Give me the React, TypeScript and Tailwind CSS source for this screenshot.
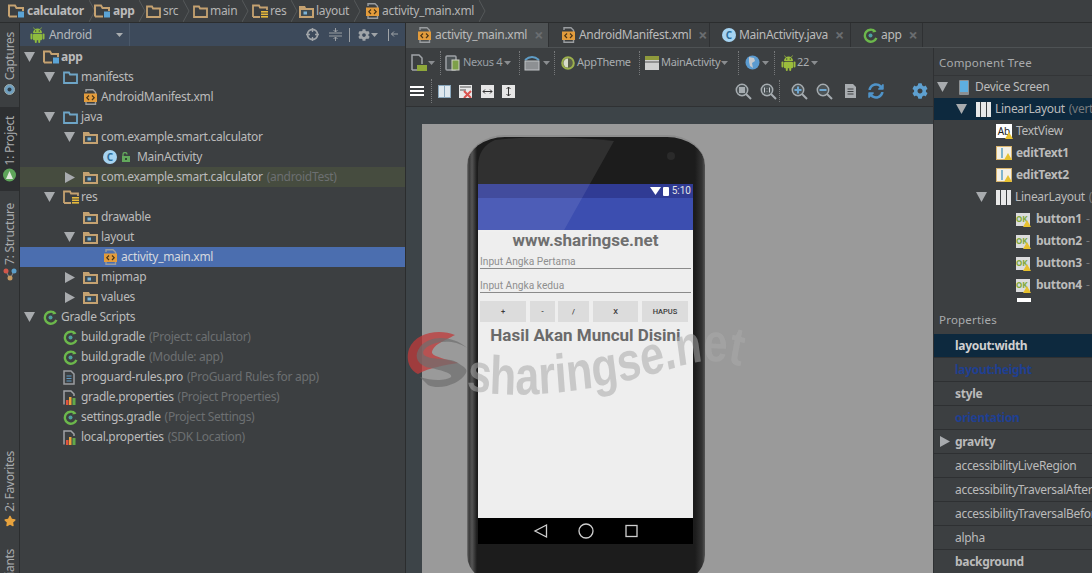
import React from 'react';
import { FaCog, FaStar, FaSyncAlt } from 'react-icons/fa';

const Svg = ({ w, h, children, className }: { w: number; h: number; children: React.ReactNode; className?: string }) => (
  <svg width={w} height={h} viewBox={`0 0 ${w} ${h}`} className={'shrink-0 ' + (className || '')}>{children}</svg>
);

const TAN = '#c5a271';
const ModuleFolder = () => (
  <Svg w={17} h={14}>
    <path d="M1 12.5V1.5h6l1.5 2.5H15v3M1 12.5h8" fill="none" stroke={TAN} strokeWidth="2" />
    <rect x="10" y="7.5" width="6" height="6" fill="#5ba4d6" />
  </Svg>
);
const BlueFolder = () => (
  <Svg w={15} h={13}>
    <path d="M1 12V1.5h5l1 2h7V12z" fill="none" stroke="#6ea6c8" strokeWidth="1.8" />
  </Svg>
);
const TanFolder = () => (
  <Svg w={15} h={13}>
    <path d="M1 12V1.5h5l1 2h7V12z" fill="none" stroke={TAN} strokeWidth="1.8" />
  </Svg>
);
const PkgFolder = () => (
  <Svg w={15} h={13}>
    <path d="M0 13V1h6l1 2h8v10z" fill={TAN} />
    <rect x="2" y="5" width="11" height="6" fill="#3f4a50" />
    <rect x="4.5" y="6.5" width="3.5" height="3" fill="#7cb4d8" />
  </Svg>
);
const ResFolder = () => (
  <Svg w={16} h={14}>
    <path d="M1 13V1.5h6l1 2h7V6M1 13h7" fill="none" stroke={TAN} strokeWidth="1.8" />
    <rect x="9" y="7" width="7" height="1.6" fill="#e6b93c" />
    <rect x="9" y="9.5" width="7" height="1.6" fill="#e6b93c" />
    <rect x="9" y="12" width="7" height="1.6" fill="#e6b93c" />
  </Svg>
);
const XmlFile = () => (
  <Svg w={15} h={16}>
    <path d="M3 3V.8h7l2.5 2.5V5M3 13v2.2h9.500V13" fill="none" stroke="#9a9da0" strokeWidth="1.4" />
    <rect x="1" y="4.500" width="13" height="8.500" fill="#e39c3c" />
    <path d="M6 6.500L3.800 8.700 6 11M9 6.500l2.200 2.200L9 11" fill="none" stroke="#4a3517" strokeWidth="1.2" />
  </Svg>
);
const ClassIcon = () => (
  <span className="w-[14px] h-[14px] shrink-0 rounded-full bg-[#a6d4f2] text-[#2c6c98] flex items-center justify-center text-[10px] font-bold leading-none tracking-normal">C</span>
);
const Lock = () => (
  <Svg w={9} h={10}>
    <path d="M2 4V2.500a2 2 0 0 1 4 0" fill="none" stroke="#62a85c" strokeWidth="1.300" />
    <rect x="1" y="4" width="8" height="6" fill="#62a85c" />
    <rect x="4" y="6" width="2" height="2" fill="#2f4a2f" />
  </Svg>
);
const Gradle = () => (
  <Svg w={15} h={15}>
    <path d="M12 3.300A6 6 0 1 0 13.400 10" fill="none" stroke="#6cb84c" strokeWidth="2.400" />
    <circle cx="7.500" cy="7.500" r="2" fill="#4d9fa0" />
    <path d="M10 .8l3.500 3-4 .7z" fill="#6cb84c" />
  </Svg>
);
const ProFile = () => (
  <Svg w={12} h={15}>
    <path d="M1 1h7l3 3v10H1z" fill="none" stroke="#9a9da0" strokeWidth="1.500" />
    <path d="M3.500 6h5M3.500 8.500h5M3.500 11h5" stroke="#5e9ac4" strokeWidth="1.200" />
  </Svg>
);
const PropFile = () => (
  <Svg w={13} h={15}>
    <path d="M1 14.500V1h7l3 3v2" fill="none" stroke="#a0a3a6" strokeWidth="1.500" />
    <rect x="3" y="10" width="2.500" height="5" fill="#e0553f" />
    <rect x="6" y="7" width="2.500" height="8" fill="#eaa23a" />
    <rect x="9.500" y="8" width="3" height="7" fill="#62a84a" />
  </Svg>
);
const Android = ({ c = '#9bbd3c' }: { c?: string }) => (
  <Svg w={15} h={16}>
    <path d="M3 6a4.500 4.500 0 0 1 9 0z" fill={c} />
    <path d="M4.500 2L3.500 .5M10.500 2l1-1.500" stroke={c} strokeWidth=".8" />
    <rect x="3" y="6.700" width="9" height="6.500" rx="1" fill={c} />
    <rect x=".5" y="6.500" width="2" height="6" rx="1" fill={c} />
    <rect x="12.500" y="6.500" width="2" height="6" rx="1" fill={c} />
    <rect x="4.800" y="12" width="2" height="4" rx="1" fill={c} />
    <rect x="8.200" y="12" width="2" height="4" rx="1" fill={c} />
    <circle cx="5.700" cy="4" r=".7" fill="#3c3f41" />
    <circle cx="9.300" cy="4" r=".7" fill="#3c3f41" />
  </Svg>
);
const Caret = ({ c = '#8a8d90', cls = '' }: { c?: string; cls?: string }) => (
  <Svg w={7} h={4} className={cls}><path d="M0 0h7L3.500 4z" fill={c} /></Svg>
);
const Down = () => <Svg w={11} h={10}><path d="M0 0h11L5.500 10z" fill="#a8abae" /></Svg>;
const Right = () => <Svg w={10} h={11} className="ml-[1px]"><path d="M0 0l10 5.500L0 11z" fill="#a8abae" /></Svg>;

const Chevron = () => (
  <Svg w={7} h={22} className="ml-[5px]"><path d="M0 0l6 11-6 11" fill="none" stroke="#55585a" /></Svg>
);

function Crumb({ icon, label, cls, bold }: { icon: React.ReactNode; label: string; cls: string; bold?: boolean }) {
  return (
    <div className={'flex items-center shrink-0 ' + cls}>
      {icon}
      <span className={'ml-[2px] text-[12px] ' + (bold ? 'font-bold text-[#bbbbbb]' : 'text-[#b4b4b4]')}>{label}</span>
      <Chevron />
    </div>
  );
}

const depthCls = ['pl-[23px]', 'pl-[43px]', 'pl-[63px]', 'pl-[83px]'];

function Row({ d, arrow, icon, label, note, cls = '', extra, bold, textCls = '' }: {
  d: number; arrow?: 'd' | 'r'; icon: React.ReactNode; label: string; note?: string; cls?: string; extra?: React.ReactNode; bold?: boolean; textCls?: string;
}) {
  return (
    <div className={'h-[20px] flex items-center whitespace-nowrap relative ' + depthCls[d] + ' ' + cls}>
      <span className="-ml-[19px] w-[19px] shrink-0 flex items-center">
        {arrow === 'd' ? <Down /> : arrow === 'r' ? <Right /> : null}
      </span>
      <span className="w-[18px] shrink-0 flex items-center">{icon}</span>
      {extra}
      <span className={'text-[12px] ' + (bold ? 'font-bold ' : '') + (textCls || 'text-[#bbbbbb]')}>{label}</span>
      {note && <span className="text-[12px] text-[#6c6f71] ml-[4px]">{note}</span>}
    </div>
  );
}

function RailLabel({ text, icon, cls = '' }: { text: string; icon: React.ReactNode; cls?: string }) {
  return (
    <div className={'flex flex-col items-center ' + cls}>
      <span className="[writing-mode:vertical-rl] rotate-180 text-[12px] leading-[19px] text-[#a9abad] whitespace-nowrap">{text}</span>
      {icon}
    </div>
  );
}

function Tab({ icon, label, cls, gap }: { icon: React.ReactNode; label: string; cls: string; gap: string }) {
  return (
    <div className={'h-full flex items-center shrink-0 border-r border-[#2f3133] ' + cls}>
      {icon}
      <span className="ml-[3px] text-[12px] text-[#bbbbbb] whitespace-nowrap">{label}</span>
      <span className={'text-[16px] font-bold text-[#6a6d70] leading-none ' + gap}>×</span>
    </div>
  );
}

function Section({ cls, children }: { cls: string; children: React.ReactNode }) {
  return <div className={'h-[24px] flex items-center shrink-0 border-r border-dotted border-[#77797b] ' + cls}>{children}</div>;
}

const Magnifier = ({ children, cls = '' }: { children?: React.ReactNode; cls?: string }) => (
  <Svg w={17} h={17} className={cls}>
    <circle cx="7" cy="7" r="5.700" fill="#4c5356" stroke="#a6acb0" strokeWidth="1.500" />
    <path d="M11 11l5 5" stroke="#a6acb0" strokeWidth="2" />
    {children}
  </Svg>
);

const Warn = () => (
  <svg width="8" height="7" viewBox="0 0 8 7" className="absolute -right-[1px] -bottom-[1px]"><path d="M4 0l4 7H0z" fill="#e6c12f" /></svg>
);
const TextViewIcon = () => (
  <span className="relative w-[16px] h-[14px] shrink-0 bg-white text-[#222] text-[10px] leading-[14px] text-center block tracking-normal">Ab<Warn /></span>
);
const EditIcon = () => (
  <span className="relative w-[16px] h-[14px] shrink-0 bg-[#f4f0e4] border border-[#d9b56e] block">
    <span className="absolute left-[4px] top-[1px] w-[2px] h-[10px] bg-[#7fb4cc]" /><Warn />
  </span>
);
const OkIcon = () => (
  <span className="relative w-[14px] h-[13px] shrink-0 bg-[#dcdcdc] text-[#7fa838] text-[8px] font-bold leading-[12px] block tracking-normal">OK<Warn /></span>
);
const Columns = () => (
  <span className="w-[15px] h-[15px] shrink-0 flex gap-[1px] bg-[#3c3f41]"><i className="flex-1 bg-[#e8e8e8]" /><i className="flex-1 bg-[#e8e8e8]" /><i className="flex-1 bg-[#e8e8e8]" /></span>
);

function TreeRow({ cls, arrow, icon, label, bold, note, sel, textCls = 'ml-[4px]' }: { cls: string; arrow?: boolean; icon: React.ReactNode; label: string; bold?: boolean; note?: string; sel?: boolean; textCls?: string }) {
  return (
    <div className={'h-[22px] shrink-0 flex items-center whitespace-nowrap overflow-hidden ' + cls + (sel ? ' bg-[#0d293e]' : '')}>
      <span className="w-[20px] shrink-0">{arrow && <Down />}</span>
      <span className="shrink-0 flex">{icon}</span>
      <span className={'text-[12px] text-[#bbbbbb] ' + textCls + (bold ? ' font-bold' : '')}>{label}</span>
      {note && <span className="ml-[4px] text-[12px] text-[#787a7c]">{note}</span>}
    </div>
  );
}

function Prop({ label, bold, blue, sel, arrow }: { label: string; bold?: boolean; blue?: boolean; sel?: boolean; arrow?: boolean }) {
  return (
    <div className={'h-[24px] shrink-0 flex items-center pl-[5px] border-b border-[#2e3032] whitespace-nowrap overflow-hidden ' + (sel ? 'bg-[#0d293e]' : '')}>
      <span className="w-[16px] shrink-0">{arrow && <Right />}</span>
      <span className={'text-[12px] ' + (bold ? 'font-bold ' : '') + (blue ? 'text-[#1f3f92]' : sel ? 'text-[#d0d0d0]' : 'text-[#bbbbbb]')}>{label}</span>
    </div>
  );
}

function Btn({ cls, label }: { cls: string; label: string }) {
  return <div className={'h-[21px] bg-[#dcdcdc] flex items-center justify-center text-[7.500px] font-medium text-[#3a3a3a] ' + cls}>{label}</div>;
}

function Phone() {
  return (
    <div className="relative w-[238px] h-[450px] shrink-0 rounded-[38px/30px] border-t-2 border-[#8d8d8d] bg-[linear-gradient(to_right,#777_0,#3a3a3a_2px,#555_5px,#1c1c1c_10px,#1c1c1c_228px,#333_235px,#555_238px)] pl-[11px] pt-[47px] tracking-normal">
      <div className="w-[215px] h-[360px] flex flex-col font-['Roboto',sans-serif]">
        <div className="h-[14px] bg-[#303b94] flex items-center justify-end pr-[2px] shrink-0">
          <svg width="11" height="8" viewBox="0 0 11 8"><path d="M0 0h11L5.500 8z" fill="#fff" /></svg>
          <span className="w-[6px] h-[9px] bg-white rounded-[1px] ml-[2px]" />
          <span className="text-[10px] text-[#e4e4e4] ml-[3px] leading-none">5:10</span>
        </div>
        <div className="h-[32px] bg-[#3c4eb0] shrink-0" />
        <div className="flex-1 bg-[#eeeeee] flex flex-col px-[2px]">
          <div className="text-center text-[17px] font-bold text-[#6f6f6f] leading-[20px]">www.sharingse.net</div>
          <div className="h-[19px] text-[10.200px] text-[#8f8f8f] border-b border-[#8a8a8a] leading-[23px] whitespace-nowrap">Input Angka Pertama</div>
          <div className="h-[19px] mt-[5px] text-[10.200px] text-[#8f8f8f] border-b border-[#8a8a8a] leading-[23px] whitespace-nowrap">Input Angka kedua</div>
          <div className="flex mt-[8px]">
            <Btn cls="w-[46px]" label="+" />
            <Btn cls="w-[25px] ml-[4px]" label="-" />
            <Btn cls="w-[31px] ml-[3px]" label="/" />
            <Btn cls="w-[45px] ml-[4px]" label="X" />
            <Btn cls="w-[46px] ml-[4px]" label="HAPUS" />
          </div>
          <div className="text-center text-[17px] font-bold text-[#6a6a6a] leading-[24px] mt-[1px] whitespace-nowrap">Hasil Akan Muncul Disini</div>
        </div>
        <div className="h-[26px] bg-black shrink-0 flex items-center justify-center">
          <svg width="160" height="16" viewBox="0 0 160 16">
            <path d="M40.500 2v12L29 8z" fill="none" stroke="#cfcfcf" strokeWidth="1.300" />
            <circle cx="80" cy="8" r="7" fill="none" stroke="#cfcfcf" strokeWidth="1.300" />
            <rect x="120" y="2.500" width="11" height="11" fill="none" stroke="#cfcfcf" strokeWidth="1.300" />
          </svg>
        </div>
      </div>
      <svg width="238" height="95" viewBox="0 0 238 95" className="absolute left-0 top-0 pointer-events-none">
        <path d="M28 3Q80-3 147 4L96 95H11V30Q11 10 28 3z" fill="#fff" fillOpacity=".09" />
        <circle cx="204" cy="19" r="4" fill="#2a2a2a" />
      </svg>
    </div>
  );
}

export default function App() {
  return (
    <div className="w-[1092px] h-[573px] overflow-hidden flex flex-col bg-[#3c3f41] font-['Noto_Sans',sans-serif] tracking-[-0.3px] text-[#bbbbbb]">
      {/* breadcrumb */}
      <div className="h-[23px] shrink-0 flex items-center border-b border-[#2b2d2e] pl-[8px] overflow-hidden">
        <Crumb cls="w-[86px]" icon={<ModuleFolder />} label="calculator" bold />
        <Crumb cls="w-[52px]" icon={<ModuleFolder />} label="app" bold />
        <Crumb cls="w-[47px]" icon={<TanFolder />} label="src" />
        <Crumb cls="w-[59px]" icon={<TanFolder />} label="main" />
        <Crumb cls="w-[47px]" icon={<ResFolder />} label="res" />
        <Crumb cls="w-[66px]" icon={<PkgFolder />} label="layout" />
        <Crumb cls="w-[124px]" icon={<XmlFile />} label="activity_main.xml" />
      </div>

      <div className="flex-1 flex min-h-0">
        {/* left rail */}
        <div className="w-[20px] shrink-0 border-r border-[#2b2d2e] flex flex-col items-center overflow-hidden">
          <RailLabel cls="pt-[9px] h-[84px]" text="Captures" icon={<Svg w={13} h={13} className="mt-[3px]"><circle cx="6.500" cy="6.500" r="5" fill="#6f9fc0" stroke="#9aa" /><circle cx="6.500" cy="6.500" r="2" fill="#2e3f4a" /></Svg>} />
          <div className="w-full h-[84px] bg-[#2d2f31] pt-[9px]">
            <RailLabel text="1: Project" icon={<Svg w={13} h={14} className="mt-[3px]"><circle cx="6.500" cy="7" r="6.500" fill="#5ea55a" /><path d="M3 11l3.500-8 3.500 8z" fill="#dfe8dc" /></Svg>} />
          </div>
          <RailLabel cls="pt-[12px]" text="7: Structure" icon={<Svg w={14} h={14} className="mt-[2px]"><path d="M3 4l4 8 4-8" stroke="#8a8d90" fill="none" /><circle cx="3" cy="4" r="2.500" fill="#d0574a" /><circle cx="11" cy="4" r="2.500" fill="#5b9ec9" /><circle cx="7" cy="11" r="2.500" fill="#c59a62" /></Svg>} />
          <RailLabel cls="mt-auto" text="2: Favorites" icon={<FaStar className="mt-[3px] text-[#e8a33d]" size={12} />} />
          <div className="h-[24px] mt-[22px] shrink-0 overflow-hidden flex items-start">
            <span className="[writing-mode:vertical-rl] rotate-180 text-[12px] leading-[19px] text-[#a9abad] whitespace-nowrap">Build Variants</span>
          </div>
        </div>

        {/* project panel */}
        <div className="w-[386px] shrink-0 flex flex-col border-r border-[#2b2d2e]">
          <div className="h-[23px] shrink-0 bg-[#3d4a5b] flex items-center pl-[10px]">
            <Android c="#8fbb3e" />
            <span className="ml-[4px] text-[12px] text-[#b4b8bc]">Android</span>
            <Caret c="#a9adb0" cls="ml-[24px] mr-[6px]" />
            <span className="w-px h-full bg-[#4a5869]" />
            <div className="ml-auto flex items-center pr-[6px]">
              <Svg w={13} h={13}><circle cx="6.500" cy="6.500" r="5" fill="none" stroke="#a0a4a8" strokeWidth="1.800" /><path d="M6.500 0v4M6.500 9v4M0 6.500h4M9 6.500h4" stroke="#a0a4a8" strokeWidth="1.300" /></Svg>
              <Svg w={13} h={13} className="ml-[10px]"><path d="M6.500 0v4M6.500 9v4M0 5h13M0 8h13M4.500 2l2 2 2-2M4.500 11l2-2 2 2" stroke="#9a9ea2" fill="none" /></Svg>
              <span className="w-px h-[14px] bg-[#9a9ea2] ml-[7px]" />
              <FaCog className="ml-[8px] text-[#a0a4a8]" size={12} />
              <Caret c="#a0a4a8" cls="ml-[1px]" />
              <Svg w={12} h={12} className="ml-[9px]"><path d="M1.500 0v12M11 5H4.500M7 2.500L4.500 5 7 7.500" stroke="#a0a4a8" fill="none" /></Svg>
            </div>
          </div>
          <div className="h-[1px] shrink-0" />
          <Row d={0} arrow="d" icon={<ModuleFolder />} label="app" bold />
          <Row d={1} arrow="d" icon={<BlueFolder />} label="manifests" />
          <Row d={2} icon={<XmlFile />} label="AndroidManifest.xml" />
          <Row d={1} arrow="d" icon={<BlueFolder />} label="java" />
          <Row d={2} arrow="d" icon={<PkgFolder />} label="com.example.smart.calculator" />
          <Row d={3} icon={<ClassIcon />} extra={<span className="mr-[7px] flex"><Lock /></span>} label="MainActivity" />
          <Row d={2} arrow="r" icon={<PkgFolder />} label="com.example.smart.calculator" note="(androidTest)" cls="bg-[#464c3f]" />
          <Row d={1} arrow="d" icon={<ResFolder />} label="res" />
          <Row d={2} icon={<PkgFolder />} label="drawable" />
          <Row d={2} arrow="d" icon={<PkgFolder />} label="layout" />
          <Row d={3} icon={<XmlFile />} label="activity_main.xml" cls="bg-[#4b6eaf]" textCls="text-[#d4d8de]" />
          <Row d={2} arrow="r" icon={<PkgFolder />} label="mipmap" />
          <Row d={2} arrow="r" icon={<PkgFolder />} label="values" />
          <Row d={0} arrow="d" icon={<Gradle />} label="Gradle Scripts" />
          <Row d={1} icon={<Gradle />} label="build.gradle" note="(Project: calculator)" />
          <Row d={1} icon={<Gradle />} label="build.gradle" note="(Module: app)" />
          <Row d={1} icon={<ProFile />} label="proguard-rules.pro" note="(ProGuard Rules for app)" />
          <Row d={1} icon={<PropFile />} label="gradle.properties" note="(Project Properties)" />
          <Row d={1} icon={<Gradle />} label="settings.gradle" note="(Project Settings)" />
          <Row d={1} icon={<PropFile />} label="local.properties" note="(SDK Location)" />
        </div>

        {/* editor + right panel */}
        <div className="flex-1 flex flex-col min-w-0">
          <div className="h-[25px] shrink-0 flex items-center border-b border-[#4e5254]">
            <Tab cls="w-[143px] pl-[11px] bg-[#4e5254]" gap="ml-[7px]" icon={<XmlFile />} label="activity_main.xml" />
            <Tab cls="w-[161px] pl-[12px]" gap="ml-[7px]" icon={<XmlFile />} label="AndroidManifest.xml" />
            <Tab cls="w-[141px] pl-[12px]" gap="ml-[7px]" icon={<ClassIcon />} label="MainActivity.java" />
            <Tab cls="w-[72px] pl-[12px]" gap="ml-[7px]" icon={<Gradle />} label="app" />
          </div>

          <div className="flex-1 flex min-h-0">
            {/* designer */}
            <div className="w-[527px] shrink-0 flex flex-col relative">
              <div className="h-[29px] shrink-0 flex items-center">
                <Section cls="w-[35px] pl-[5px]">
                  <Svg w={16} h={18}><path d="M1 16V1h7l3 3v6" fill="none" stroke="#a0a4a8" strokeWidth="1.500" /><path d="M1 16h5" stroke="#a0a4a8" strokeWidth="1.500" /><rect x="6" y="11" width="10" height="6" fill="#8fa83a" /></Svg>
                  <Caret cls="ml-[1px]" />
                </Section>
                <Section cls="w-[79px] pl-[4px]">
                  <Svg w={15} h={16}><rect x="1" y="1" width="10" height="14" rx="1" fill="#4c5356" stroke="#9da1a5" strokeWidth="1.500" /><rect x="7" y="5" width="7" height="10" fill="#7ea04a" stroke="#cfd2c6" /></Svg>
                  <span className="ml-[3px] text-[11px] text-[#9aa0a6] whitespace-nowrap">Nexus 4</span>
                  <Caret cls="ml-[2px]" />
                </Section>
                <Section cls="w-[35px] pl-[4px]">
                  <Svg w={16} h={16}><path d="M1 5Q8-1 15 5" fill="none" stroke="#5f9dc6" strokeWidth="1.800" /><rect x="1" y="6" width="14" height="9" fill="#8d9093" stroke="#c0c3c6" /></Svg>
                  <Caret cls="ml-[3px]" />
                </Section>
                <Section cls="w-[85px] pl-[6px]">
                  <Svg w={14} h={14}><circle cx="7" cy="7" r="5.800" fill="#5a5f4a" stroke="#9cb04c" strokeWidth="2" /><path d="M7 2.500a4.500 4.500 0 0 0 0 9z" fill="#d8dcc8" /></Svg>
                  <span className="ml-[2px] text-[11px] text-[#a9adb0] whitespace-nowrap">AppTheme</span>
                </Section>
                <Section cls="w-[99px] pl-[5px]">
                  <Svg w={14} h={16}><rect x="0" y="1" width="14" height="14" fill="#cfd0d0" /><rect x="0" y="1" width="14" height="4" fill="#8f9a3c" /><path d="M0 7h14" stroke="#555" /></Svg>
                  <span className="ml-[2px] text-[11px] text-[#a9adb0] whitespace-nowrap">MainActivity</span>
                  <Caret cls="ml-[1px]" />
                </Section>
                <Section cls="w-[36px] pl-[6px]">
                  <Svg w={15} h={15}><circle cx="7.500" cy="7.500" r="7" fill="#5b9bd0" /><path d="M4 2l5 1 1 3-3 2 1 5-3-2-1-4z" fill="#c4c8cc" /></Svg>
                  <Caret cls="ml-[2px]" />
                </Section>
                <div className="pl-[6px] flex items-center">
                  <Android />
                  <span className="ml-[1px] text-[11px] text-[#a9adb0]">22</span>
                  <Caret cls="ml-[2px]" />
                </div>
              </div>

              <div className="h-[30px] shrink-0 flex items-center border-b border-[#2f3133] pb-[1px]">
                <div className="w-[26px] h-[24px] pl-[4px] flex flex-col justify-center gap-[2px] border-r border-dotted border-[#77797b] shrink-0">
                  <span className="w-[14px] h-[2px] bg-white block" /><span className="w-[14px] h-[2px] bg-white block" /><span className="w-[14px] h-[2px] bg-white block" />
                </div>
                <div className="flex items-center pl-[6px]">
                  <span className="w-[13px] h-[13px] flex gap-[1px] bg-[#8aa7bc] p-[1px]"><i className="flex-1 bg-[#dfe8ee]" /><i className="flex-1 bg-[#dfe8ee]" /></span>
                  <Svg w={13} h={13} className="ml-[8px]"><rect width="13" height="13" fill="#e8e8e8" /><path d="M1 2h11M1 5h6" stroke="#555" /><path d="M5 6l7 7M12 6l-7 7" stroke="#d9534f" strokeWidth="2" /></Svg>
                  <Svg w={13} h={13} className="ml-[9px]"><rect width="13" height="13" fill="#e6e6e6" /><path d="M2 6.500h9M4 4.500l-2 2 2 2M9 4.500l2 2-2 2" fill="none" stroke="#333" /></Svg>
                  <Svg w={13} h={13} className="ml-[8px]"><rect width="13" height="13" fill="#e6e6e6" /><path d="M6.500 2v9M4.500 4l2-2 2 2M4.500 9l2 2 2-2" fill="none" stroke="#333" /></Svg>
                </div>
                <div className="ml-auto flex items-center pr-[5px]">
                  <Magnifier><rect x="4" y="4" width="6" height="6" fill="#a6acb0" /></Magnifier>
                  <Magnifier cls="ml-[8px]"><path d="M4.500 4.500v5M7 5v.5M7 8v.5M9.500 4.500v5" stroke="#c8ccd0" /></Magnifier>
                  <span className="w-0 h-[22px] border-r border-dotted border-[#77797b] ml-[2px]" />
                  <Magnifier cls="ml-[11px]"><path d="M7 3.500v7M3.500 7h7" stroke="#6ea6cf" strokeWidth="2" /></Magnifier>
                  <Magnifier cls="ml-[8px]"><path d="M3.500 7h7" stroke="#6ea6cf" strokeWidth="2" /></Magnifier>
                  <Svg w={11} h={14} className="ml-[12px]"><path d="M0 0h8l3 3v11H0z" fill="#a9adb0" /><path d="M2.500 5h6M2.500 7.500h6M2.500 10h6" stroke="#3c3f41" /></Svg>
                  <FaSyncAlt className="ml-[12px] text-[#4f93c8]" size={16} />
                  <FaCog className="ml-[28px] text-[#5ea0d0]" size={16} />
                </div>
              </div>

              {/* canvas */}
              <div className="flex-1 min-h-0 bg-[#3d4448] pl-[16px] pt-[17px] overflow-hidden">
                <div className="h-full bg-[#9a9a9a] pl-[45px] pt-[11px]">
                  <Phone />
                </div>
              </div>

              {/* watermark */}
              <svg width="360" height="90" viewBox="0 0 360 90" className="absolute left-0 top-[283px] pointer-events-none overflow-visible">
                <path d="M49 4C35-2 10 0 3 18-1 30 5 40 12 43 25 36 40 34 52 32 40 28 28 26 26 22 26 14 38 10 49 4z" fill="#c03a3a" fillOpacity=".75" />
                <path d="M61 17C50 10 40 10 30 12 20 15 15 20 18 24 25 30 45 26 52 32 58 36 62 38 60 42 55 52 35 60 22 54L14 46C25 50 40 50 45 46 48 42 30 38 20 36 10 32 8 24 14 16 24 4 46 4 61 17z" fill="#6e6e6e" fillOpacity=".7" />
                <defs>
                  <path id="wm" d="M75 58C140 71 240 60 330 38S405 46 520 54" />
                </defs>
                <g transform="scale(.8 1)">
                  <text fontFamily="'Liberation Sans',sans-serif" fontWeight="700" fontSize="54" fill="#aaaaaa" fillOpacity=".55">
                    <textPath href="#wm">sharingse.net</textPath>
                  </text>
                </g>
              </svg>
            </div>

            {/* right panel */}
            <div className="flex-1 min-w-0 flex flex-col border-l border-[#2f3133] overflow-hidden">
              <div className="h-[257px] shrink-0 flex flex-col overflow-hidden">
                <div className="h-[28px] shrink-0 flex items-end pb-[4px] pl-[5px] border-b border-[#333537] text-[11.500px] text-[#a9abad] tracking-[.2px]">Component Tree</div>
                <TreeRow cls="pl-[3px]" arrow icon={<span className="w-[14px] flex justify-center"><span className="w-[10px] h-[15px] bg-[#8b8f92] rounded-[1px] p-[1px] pb-[3px] block"><span className="block h-full bg-[#5eaee0]" /></span></span>} label="Device Screen" />
                <TreeRow sel cls="pl-[22px]" arrow icon={<Columns />} label="LinearLayout" note="(vertical)" />
                <TreeRow cls="pl-[42px]" icon={<TextViewIcon />} label="TextView" />
                <TreeRow cls="pl-[42px]" icon={<EditIcon />} label="editText1" bold />
                <TreeRow cls="pl-[42px]" icon={<EditIcon />} label="editText2" bold />
                <TreeRow cls="pl-[42px]" arrow icon={<Columns />} label="LinearLayout" note="(horizontal)" />
                {['button1', 'button2', 'button3', 'button4'].map((b) => (
                  <TreeRow key={b} cls="pl-[62px]" textCls="ml-[6px]" icon={<OkIcon />} label={b} bold note="-" />
                ))}
                <div className="w-[14px] h-[4px] bg-white ml-[83px] mt-[2px] shrink-0" />
              </div>
              <div className="h-[29px] shrink-0 flex items-center pl-[5px] text-[11.500px] text-[#a9abad] tracking-[.2px]">Properties</div>
              <Prop label="layout:width" bold sel />
              <Prop label="layout:height" bold blue />
              <Prop label="style" bold />
              <Prop label="orientation" bold blue />
              <Prop label="gravity" bold arrow />
              <Prop label="accessibilityLiveRegion" />
              <Prop label="accessibilityTraversalAfter" />
              <Prop label="accessibilityTraversalBefore" />
              <Prop label="alpha" />
              <Prop label="background" bold />
            </div>
          </div>
        </div>
      </div>
    </div>
  );
}
